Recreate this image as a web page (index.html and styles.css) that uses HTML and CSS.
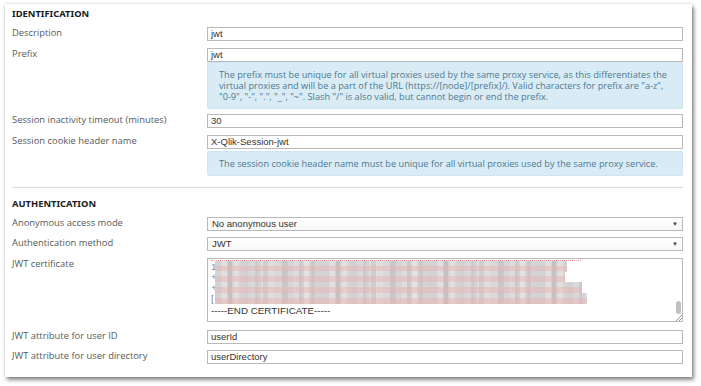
FILE: index.html
```html
<!DOCTYPE html>
<html>
<head>
<meta charset="utf-8">
<link rel="stylesheet" href="styles.css">
</head>
<body>
<div class="panel">
  <div class="heading">IDENTIFICATION</div>
  <div class="field">
    <div class="label">Description</div>
    <div class="control"><div class="input">jwt</div></div>
  </div>
  <div class="field gap5">
    <div class="label">Prefix</div>
    <div class="control">
      <div class="input">jwt</div>
      <div class="info">The prefix must be unique for all virtual proxies used by the same proxy service, as this differentiates the virtual proxies and will be a part of the URL (https://[node]/[prefix]/). Valid characters for prefix are "a-z", "0-9", "-", ".", "_", "~". Slash "/" is also valid, but cannot begin or end the prefix.</div>
    </div>
  </div>
  <div class="field">
    <div class="label">Session inactivity timeout (minutes)</div>
    <div class="control"><div class="input">30</div></div>
  </div>
  <div class="field gap11">
    <div class="label">Session cookie header name</div>
    <div class="control">
      <div class="input">X-Qlik-Session-jwt</div>
      <div class="info info-gap">The session cookie header name must be unique for all virtual proxies used by the same proxy service.</div>
    </div>
  </div>
  <hr class="divider">
  <div class="heading heading-second">AUTHENTICATION</div>
  <div class="field gap6">
    <div class="label">Anonymous access mode</div>
    <div class="control"><div class="input select">No anonymous user<span class="arrow">▼</span></div></div>
  </div>
  <div class="field">
    <div class="label">Authentication method</div>
    <div class="control"><div class="input select">JWT<span class="arrow">▼</span></div></div>
  </div>
  <div class="field gap8">
    <div class="label">JWT certificate</div>
    <div class="control">
      <div class="textarea">
        <div class="cert-line first"><span class="ch">1</span><span class="blur b1"></span></div>
        <div class="cert-line"><span class="ch">+</span><span class="blur b2"></span></div>
        <div class="cert-line"><span class="ch">+</span><span class="blur b3"></span></div>
        <div class="cert-line"><span class="ch">[</span><span class="blur b4"></span></div>
        <div class="cert-end">-----END CERTIFICATE-----</div>
        <div class="scroll-thumb"></div>
        <div class="grip"></div>
      </div>
    </div>
  </div>
  <div class="field gap6">
    <div class="label">JWT attribute for user ID</div>
    <div class="control"><div class="input">userId</div></div>
  </div>
  <div class="field last">
    <div class="label">JWT attribute for user directory</div>
    <div class="control"><div class="input">userDirectory</div></div>
  </div>
</div>
</body>
</html>
```
FILE: styles.css
```css
html, body {
  margin: 0;
  padding: 0;
  background: #ffffff;
}
body {
  width: 701px;
  height: 386px;
  overflow: hidden;
  font-family: "Open Sans", "Noto Sans", sans-serif;
}
.panel {
  box-sizing: border-box;
  margin: 4px 0 0 5px;
  width: 687px;
  height: 373px;
  background: #fff;
  padding: 3px 9px 0 7px;
  box-shadow: 2px 3px 4px rgba(0,0,0,0.45), 0 0 3px rgba(0,0,0,0.18);
}
.heading {
  height: 14px;
  line-height: 14px;
  font-size: 9.4px;
  font-weight: 700;
  color: #1a1a1a;
  font-family: "Noto Sans", sans-serif;
  margin-bottom: 6px;
}
.heading-second {
  margin-top: 9px;
}
.field {
  display: grid;
  grid-template-columns: 195px 1fr;
  margin-bottom: 7px;
}
.field.gap5 { margin-bottom: 5px; }
.field.gap6 { margin-bottom: 6px; }
.field.gap8 { margin-bottom: 8px; }
.field.gap11 { margin-bottom: 11px; }
.field.last { margin-bottom: 0; }
.label {
  font-size: 9.4px;
  line-height: 12px;
  color: #595959;
}
.control {
  display: flex;
  flex-direction: column;
}
.input {
  box-sizing: border-box;
  height: 14px;
  border: 1px solid #b9b9b9;
  background: #fff;
  font-family: "Liberation Sans", Arial, sans-serif;
  font-size: 9.5px;
  line-height: 12px;
  padding: 0 3px;
  color: #333;
  position: relative;
}
.select {
  padding-left: 4px;
  background: linear-gradient(#ffffff, #f7f7f7);
}
.arrow {
  position: absolute;
  right: 4px;
  top: 0;
  font-size: 6px;
  color: #444;
  line-height: 12px;
}
.info {
  box-sizing: border-box;
  background: #d9ecf6;
  border: 1px solid #cfe5f1;
  border-radius: 2px;
  padding: 6px 8px 6px 11px;
  font-size: 9.2px;
  line-height: 11px;
  color: #4f7891;
}
.info-gap {
  margin-top: 2px;
}
.divider {
  border: 0;
  border-top: 1px solid #dcdcdc;
  margin: 0;
  height: 0;
}
.textarea {
  box-sizing: border-box;
  height: 64px;
  border: 1px solid #b9b9b9;
  position: relative;
  padding: 1px 3px 0 3px;
  font-family: "Liberation Sans", Arial, sans-serif;
  font-size: 9.8px;
  color: #333;
  overflow: hidden;
}
.cert-line {
  display: flex;
  height: 11px;
  line-height: 11px;
}
.cert-line.first {
  border-top: 1px dotted #ee9a9a;
  width: 370px;
  height: 10px;
}
.ch {
  width: 4px;
  color: #888;
  flex: none;
}
.blur {
  height: 11px;
  background:
    linear-gradient(180deg, rgba(255,255,255,0) 0 5px, rgba(236,176,176,0.45) 5px 11px),
    repeating-linear-gradient(90deg, rgba(255,255,255,0) 0 6px, rgba(255,255,255,0.15) 6px 13px, rgba(0,0,0,0.04) 13px 19px, rgba(255,255,255,0.08) 19px 27px),
    repeating-linear-gradient(90deg, #d3d3d5 0 7px, #dcdada 7px 12px, #cbc9cc 12px 17px, #dedede 17px 24px, #d6d0d0 24px 31px, #cfcfd3 31px 36px);
}
.b1 { width: 352px; }
.b2 { width: 350px; }
.b3 { width: 367px; }
.b4 { width: 372px; }
.cert-end {
  line-height: 12px;
  margin-top: 1px;
}
.scroll-thumb {
  position: absolute;
  right: 1px;
  top: 42px;
  width: 5px;
  height: 13px;
  border-radius: 3px;
  background: #c1c1c1;
}
.grip {
  position: absolute;
  right: 0;
  bottom: 0;
  width: 6px;
  height: 6px;
  background: linear-gradient(135deg, transparent 0 45%, #999 45% 55%, transparent 55% 70%, #999 70% 80%, transparent 80%);
}
```
